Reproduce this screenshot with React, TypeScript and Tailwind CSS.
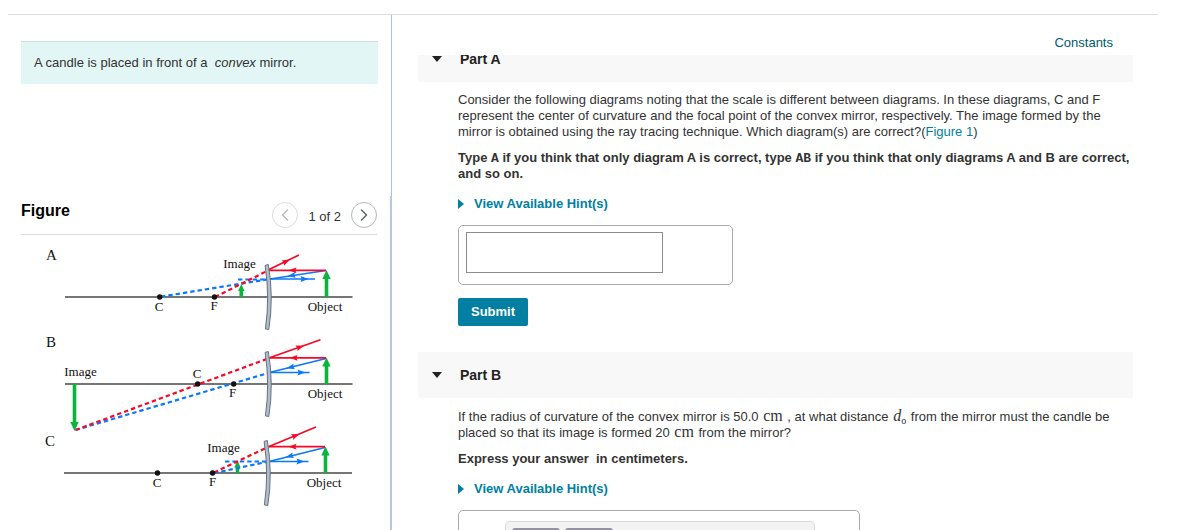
import React from 'react';
import { ChevronLeft, ChevronRight } from 'lucide-react';

type Point = [number, number];

interface DiagramData {
  name: string;
  label: Point;
  axis: [Point, Point];
  points: { name: string; at: Point; text: Point }[];
  imageText: Point;
  objectText: Point;
  imageArrow: { from: Point; to: Point };
  objectArrow: { from: Point; to: Point };
  rays: { color: string; from: Point; to: Point; tip?: Point }[];
  dashes: { color: string; from: Point; to: Point }[];
  mirror: Point;
}

const RED = '#f80826';
const BLUE = '#0a78fa';
const GREEN = '#0ab53c';

const diagrams: DiagramData[] = [
  {
    name: 'A',
    label: [46, 260],
    axis: [[65, 297], [352.5, 297]],
    points: [
      { name: 'C', at: [159.7, 297], text: [159, 311] },
      { name: 'F', at: [214.5, 297], text: [214, 310] },
    ],
    imageText: [239.5, 268],
    objectText: [325, 311],
    imageArrow: { from: [241.3, 297], to: [241.3, 284] },
    objectArrow: { from: [326.5, 297], to: [326.5, 270] },
    dashes: [
      { color: BLUE, from: [161, 296.6], to: [270, 279] },
      { color: BLUE, from: [238, 279.5], to: [270, 279.5] },
      { color: RED, from: [215, 297], to: [269, 270] },
    ],
    rays: [
      { color: BLUE, from: [326, 270.5], to: [270, 279], tip: [288.5, 276] },
      { color: BLUE, from: [270, 279], to: [315, 279], tip: [307.5, 279] },
      { color: RED, from: [326, 270.3], to: [269, 270.3], tip: [289.5, 270.3] },
      { color: RED, from: [269, 269.5], to: [299, 255], tip: [289, 260] },
    ],
    mirror: [267, 265],
  },
  {
    name: 'B',
    label: [46, 347],
    axis: [[65, 384], [352.5, 384]],
    points: [
      { name: 'C', at: [197.7, 384], text: [197, 377.5] },
      { name: 'F', at: [233.7, 384], text: [232.5, 397] },
    ],
    imageText: [80.5, 376],
    objectText: [325, 398],
    imageArrow: { from: [74.5, 384], to: [74.5, 431] },
    objectArrow: { from: [326.5, 384], to: [326.5, 357.5] },
    dashes: [
      { color: BLUE, from: [75.5, 430], to: [270, 372.5] },
      { color: RED, from: [75.5, 430], to: [268, 358.5] },
    ],
    rays: [
      { color: BLUE, from: [326, 358.5], to: [270.5, 372.3], tip: [287.5, 368] },
      { color: BLUE, from: [270.5, 372.5], to: [309.5, 372.5], tip: [304.5, 372.5] },
      { color: RED, from: [326, 357.8], to: [269.5, 357.8], tip: [290.5, 357.8] },
      { color: RED, from: [269.5, 357.8], to: [320.5, 339.7], tip: [303, 346] },
    ],
    mirror: [267, 352],
  },
  {
    name: 'C',
    label: [45, 446],
    axis: [[64, 473], [352, 473]],
    points: [
      { name: 'C', at: [157.5, 473], text: [157, 486.5] },
      { name: 'F', at: [212.6, 473], text: [212.5, 486] },
    ],
    imageText: [223.5, 451.5],
    objectText: [324, 486.5],
    imageArrow: { from: [237.5, 473], to: [237.5, 460.5] },
    objectArrow: { from: [325.5, 473], to: [325.5, 446.5] },
    dashes: [
      { color: BLUE, from: [225, 461.5], to: [269, 461.5] },
      { color: BLUE, from: [214, 473], to: [269, 461.5] },
      { color: RED, from: [214, 472.5], to: [268, 447] },
    ],
    rays: [
      { color: BLUE, from: [325, 447.5], to: [270, 461.3], tip: [286.5, 457] },
      { color: BLUE, from: [270, 461.5], to: [308.5, 461.5], tip: [303.5, 461.5] },
      { color: RED, from: [325, 446.7], to: [268.5, 446.7], tip: [289.5, 446.7] },
      { color: RED, from: [268.5, 446.7], to: [316, 427], tip: [298.5, 434.3] },
    ],
    mirror: [266, 441],
  },
];

const angle = (from: Point, to: Point) =>
  (Math.atan2(to[1] - from[1], to[0] - from[0]) * 180) / Math.PI;

// Thick green arrow used for the object and its image
const Arrow: React.FC<{ from: Point; to: Point }> = ({ from, to }) => {
  const length = Math.abs(to[1] - from[1]);
  const head = length < 20 ? 7 : 9;
  const half = length < 20 ? 3.2 : 4.2;
  return (
    <g transform={`translate(${to[0]} ${to[1]}) rotate(${angle(from, to)})`} fill={GREEN}>
      <rect x={-length} y={-1.8} width={length - head + 1} height={3.6} />
      <path d={`M0 0 L${-head} ${-half} V${half} Z`} />
    </g>
  );
};

const Diagram: React.FC<{ data: DiagramData }> = ({ data }) => (
  <g>
    <text x={data.label[0]} y={data.label[1]} fontSize="15">{data.name}</text>
    <path
      d={`M${data.axis[0].join(' ')} L${data.axis[1].join(' ')}`}
      stroke="#757575"
      strokeWidth="1.8"
    />
    <Arrow {...data.imageArrow} />
    <Arrow {...data.objectArrow} />
    {data.dashes.map((line, idx) => (
      <path
        key={idx}
        d={`M${line.from.join(' ')} L${line.to.join(' ')}`}
        stroke={line.color}
        strokeWidth="2.2"
        strokeDasharray="4.4 3"
      />
    ))}
    {data.rays.map((ray, idx) => (
      <g key={idx}>
        <path
          d={`M${ray.from.join(' ')} L${ray.to.join(' ')}`}
          stroke={ray.color}
          strokeWidth="1.7"
        />
        {ray.tip && (
          <path
            d="M1 0 L-7 -2.9 L-5.8 0 L-7 2.9 Z"
            fill={ray.color}
            transform={`translate(${ray.tip[0]} ${ray.tip[1]}) rotate(${angle(ray.from, ray.to)})`}
          />
        )}
      </g>
    ))}
    <path
      d="M-1.9 0.4 L1.3 -0.5 Q7 32 1.8 64.5 L-1.6 63.9 Q3 32 -1.9 0.4 Z"
      fill="#aebdd2"
      stroke="#5f646b"
      strokeWidth="0.9"
      transform={`translate(${data.mirror[0]} ${data.mirror[1]})`}
    />
    {data.points.map((point) => (
      <g key={point.name}>
        <circle cx={point.at[0]} cy={point.at[1]} r="2.7" />
        <text x={point.text[0]} y={point.text[1]} textAnchor="middle">{point.name}</text>
      </g>
    ))}
    <text x={data.imageText[0]} y={data.imageText[1]} textAnchor="middle">Image</text>
    <text x={data.objectText[0]} y={data.objectText[1]} textAnchor="middle">Object</text>
  </g>
);

const PartTitle: React.FC<{ title: string }> = ({ title }) => (
  <button type="button" className="flex h-[46px] w-full shrink-0 items-center gap-[18px] bg-[#f8f8f8] pl-[14px] text-left">
    <svg className="h-[6px] w-[10px]" viewBox="0 0 10 6" aria-hidden="true">
      <path d="M0 0 H10 L5 6 Z" fill="#222" />
    </svg>
    <span className="text-sm leading-4 font-bold text-[#222]">{title}</span>
  </button>
);

const HintButton: React.FC = () => (
  <button type="button" className="mt-[14px] flex items-center gap-[10px] font-bold text-[#007fa3]">
    <svg className="h-[10px] w-[6px]" viewBox="0 0 6 10" aria-hidden="true">
      <path d="M0 0 V10 L6 5 Z" fill="currentColor" />
    </svg>
    View Available Hint(s)
  </button>
);

const Code: React.FC<{ children: string }> = ({ children }) => (
  <code className="font-['Liberation_Mono',monospace] text-[13px] leading-none">{children}</code>
);

const MathText: React.FC<{ children: React.ReactNode }> = ({ children }) => (
  <span className="px-px font-['Liberation_Serif',serif] text-base leading-3">{children}</span>
);

const App: React.FC = () => {
  return (
    <div className="h-screen overflow-hidden bg-white pt-[14px] pr-[25px] pl-2 font-['Liberation_Sans',Arial,sans-serif] text-[13px] leading-4 text-[#333]">
      <div className="flex h-full border-t border-[#dcdcdc]">
        {/* Problem and figure */}
        <aside className="flex w-96 shrink-0 flex-col">
          <div className="h-[181px] border-r border-[#b7c3cb] pt-[26px] pr-[13px] pl-[13px]">
            <p className="border-t border-[#d3e0dd] bg-[#e2f6f5] px-[13px] py-[13px]">
              A candle is placed in front of a &nbsp;<em>convex</em> mirror.
            </p>
          </div>
          <div className="flex-1 border-r-2 border-[#b5cade] pr-[13px] pl-[13px]">
            <div className="flex h-[39px] items-center justify-between border-b border-[#dcdcdc]">
              <h2 className="pb-2 text-base font-bold text-black">Figure</h2>
              <div className="flex items-center gap-[10px]">
                <button type="button" aria-label="Previous figure" disabled className="flex size-[26px] items-center justify-center rounded-full border border-[#dcdcdc] text-[#b8b8b8]">
                  <ChevronLeft className="size-5" strokeWidth={1.75} />
                </button>
                <span className="pt-1">1 of 2</span>
                <button type="button" aria-label="Next figure" className="flex size-[26px] items-center justify-center rounded-full border border-[#b8b8b8] text-[#5b6366]">
                  <ChevronRight className="size-5" strokeWidth={1.75} />
                </button>
              </div>
            </div>
            <svg
              viewBox="21 235 356 290"
              className="w-full font-['Palatino_Linotype',Palatino,'Liberation_Serif',serif]"
              fontSize="13"
              fill="#111"
              role="img"
              aria-label="Ray diagrams A, B and C"
            >
              {diagrams.map((data) => (
                <Diagram key={data.name} data={data} />
              ))}
            </svg>
          </div>
        </aside>

        {/* Questions */}
        <main className="min-w-0 flex-1 pr-[25px] pl-[26px]">
          <div className="flex h-10 items-end justify-end pr-5 pb-1">
            <a href="#constants" className="text-[#005a70]">Constants</a>
          </div>

          <section>
            <div className="flex h-[27px] items-end overflow-hidden">
              <PartTitle title="Part A" />
            </div>
            <div className="pt-[10px] pb-[26px] pl-10">
              <p>
                Consider the following diagrams noting that the scale is different between diagrams. In these diagrams, C and F
                represent the center of curvature and the focal point of the convex mirror, respectively. The image formed by the
                mirror is obtained using the ray tracing technique. Which diagram(s) are correct?(
                <a href="#figure1" className="text-[#007fa3]">Figure 1</a>)
              </p>
              <p className="mt-[10px] font-bold">
                Type <Code>A</Code> if you think that only diagram A is correct, type <Code>AB</Code> if you think that only
                diagrams A and B are correct, and so on.
              </p>
              <HintButton />
              <div className="mt-[13px] h-[60px] w-[275px] rounded-[5px] border border-[#a9a9a9] px-[7px] py-[6px]">
                <input type="text" aria-label="Part A answer" className="block h-[41px] w-[197px] border border-[#8c8c8c] px-2 outline-none" />
              </div>
              <button type="button" className="mt-[13px] h-7 rounded-[2px] bg-[#007fa3] px-[13px] font-bold text-white">
                Submit
              </button>
            </div>
          </section>

          <section>
            <PartTitle title="Part B" />
            <div className="pt-[11px] pl-10">
              <p>
                If the radius of curvature of the convex mirror is 50.0 <MathText>cm</MathText> , at what distance{' '}
                <MathText>
                  <i>d</i>
                  <sub className="text-[10px] leading-[0]">o</sub>
                </MathText>{' '}
                from the mirror must the candle be placed so that its image is formed 20 <MathText>cm</MathText> from the mirror?
              </p>
              <p className="mt-[10px] font-bold">Express your answer &nbsp;in centimeters.</p>
              <HintButton />
              <div className="mt-[13px] h-24 w-[402px] rounded-[5px] border border-[#a9a9a9] pt-[10px] pr-11 pl-[46px]">
                <div className="flex h-12 gap-[5px] rounded-[5px] border border-[#d8d8d8] bg-[#f3f3f3] px-[6px] pt-[6px]">
                  <button type="button" aria-label="Templates" className="h-7 w-12 rounded-[3px] bg-[#9292a0]" />
                  <button type="button" aria-label="Symbols" className="h-7 w-12 rounded-[3px] bg-[#9292a0]" />
                </div>
              </div>
            </div>
          </section>
        </main>
      </div>
    </div>
  );
};

export default App;
